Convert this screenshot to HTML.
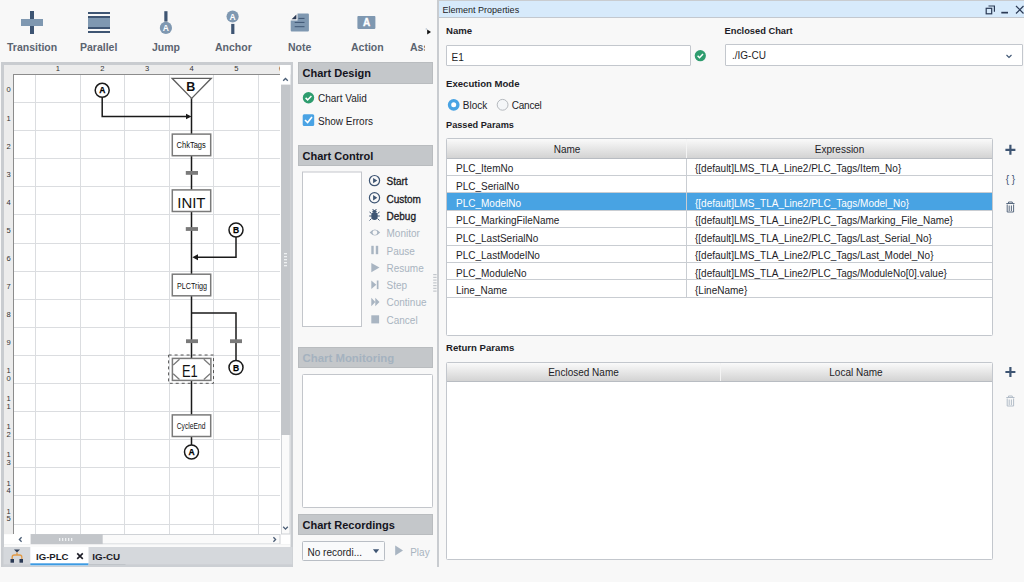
<!DOCTYPE html>
<html><head><meta charset="utf-8">
<style>
*{margin:0;padding:0;box-sizing:border-box}
html,body{width:1024px;height:582px;overflow:hidden;background:#f8f8f8;font-family:"Liberation Sans",sans-serif;color:#1d1d27}
.a{position:absolute}
.tl{position:absolute;font-weight:bold;font-size:10.5px;color:#5b6470;white-space:nowrap;line-height:12px}
.hdr{position:absolute;left:298px;width:135px;background:#c4c7ca;box-shadow:inset 0 0 0 1px #b9bcbf;font-weight:bold;font-size:11px;color:#141420;padding-left:4.5px;white-space:nowrap}
.lbl{position:absolute;font-size:10px;white-space:nowrap;line-height:12px}
.bl{position:absolute;font-weight:bold;font-size:9.6px;white-space:nowrap;line-height:12px}
</style></head><body>
<div id="root" class="a" style="left:0;top:0;width:1024px;height:582px">

<!-- TOOLBAR -->
<div class="a" style="left:30px;top:11px;width:4px;height:23px;background:#3e5573"></div>
<div class="a" style="left:21px;top:19px;width:22px;height:7px;background:#7f98b1"></div>
<div class="tl" style="left:7px;top:41px">Transition</div>

<div class="a" style="left:88px;top:12px;width:22px;height:2px;background:#3e5573"></div>
<div class="a" style="left:88px;top:16px;width:22px;height:13px;background:#7f98b1;border-top:2px solid #3e5573;border-bottom:2px solid #3e5573"></div>
<div class="a" style="left:88px;top:31px;width:22px;height:2px;background:#3e5573"></div>
<div class="tl" style="left:80px;top:41px">Parallel</div>

<svg class="a" style="left:140px;top:0" width="300" height="40" viewBox="140 0 300 40" font-family="Liberation Sans, sans-serif">
<rect x="164.3" y="11.2" width="3.2" height="10.4" fill="#3e5573"/>
<circle cx="165.9" cy="27.9" r="6.1" fill="#7f98b1"/>
<text x="165.9" y="31" font-size="8.5px" font-weight="bold" fill="#fff" text-anchor="middle">A</text>
<circle cx="232.6" cy="16.5" r="6.1" fill="#7f98b1"/>
<text x="232.6" y="19.6" font-size="8.5px" font-weight="bold" fill="#fff" text-anchor="middle">A</text>
<rect x="231.2" y="23.9" width="3.2" height="10.1" fill="#3e5573"/>
<path d="M297.5 13.6 H307.9 Q308.9 13.6 308.9 14.6 V30.6 Q308.9 31.6 307.9 31.6 H291.7 Q290.7 31.6 290.7 30.6 V20.4 L297.5 20.4 Z" fill="#7f98b1"/>
<path d="M291.6 19.3 L296.4 14.5 V19.3 Z" fill="#2b3a55"/>
<g fill="#3e5573"><rect x="298.5" y="17.9" width="6" height="1"/><rect x="294.7" y="21.9" width="9.8" height="1"/><rect x="294.7" y="26.2" width="9.8" height="1"/></g>
<rect x="357.4" y="16.1" width="18" height="12.8" rx="0.8" fill="#7f98b1"/>
<text x="366.6" y="26" font-size="10px" font-weight="bold" fill="#fff" stroke="#fff" stroke-width="0.35" text-anchor="middle">A</text>
<path d="M427.2 29.5 L431 32 L427.2 34.5 Z" fill="#111"/>
<path d="M425.5 29 L426.5 28 V30 Z" fill="#7f98b1"/>
</svg>
<div class="tl" style="left:152px;top:41px">Jump</div>
<div class="tl" style="left:215px;top:41px">Anchor</div>
<div class="tl" style="left:288px;top:41px">Note</div>
<div class="tl" style="left:351px;top:41px">Action</div>
<div class="tl" style="left:410px;top:41px;width:14.5px;overflow:hidden">Ass</div>

<!-- CHART FRAME -->
<svg class="a" style="left:0;top:0" width="300" height="582" viewBox="0 0 300 582" font-family="Liberation Sans, sans-serif">
<!-- frame -->
<rect x="1" y="62" width="292" height="505" fill="#c9ccd0"/>
<rect x="4" y="65" width="286.5" height="479.5" fill="#ffffff"/>
<!-- ruler top & left -->
<rect x="4" y="65" width="276" height="9.5" fill="#ececec"/>
<rect x="4" y="65" width="9.3" height="469.2" fill="#ececec"/>
<!-- grid -->
<g stroke="#dbdde0" stroke-width="1">
<line x1="35.5" y1="75" x2="35.5" y2="534" />
<line x1="80.5" y1="75" x2="80.5" y2="534" />
<line x1="124.5" y1="75" x2="124.5" y2="534" />
<line x1="169.5" y1="75" x2="169.5" y2="534" />
<line x1="213.5" y1="75" x2="213.5" y2="534" />
<line x1="258.5" y1="75" x2="258.5" y2="534" />
<line x1="13.5" y1="102.5" x2="280" y2="102.5" />
<line x1="13.5" y1="130.5" x2="280" y2="130.5" />
<line x1="13.5" y1="158.5" x2="280" y2="158.5" />
<line x1="13.5" y1="186.5" x2="280" y2="186.5" />
<line x1="13.5" y1="214.5" x2="280" y2="214.5" />
<line x1="13.5" y1="243.5" x2="280" y2="243.5" />
<line x1="13.5" y1="271.5" x2="280" y2="271.5" />
<line x1="13.5" y1="299.5" x2="280" y2="299.5" />
<line x1="13.5" y1="327.5" x2="280" y2="327.5" />
<line x1="13.5" y1="355.5" x2="280" y2="355.5" />
<line x1="13.5" y1="383.5" x2="280" y2="383.5" />
<line x1="13.5" y1="411.5" x2="280" y2="411.5" />
<line x1="13.5" y1="439.5" x2="280" y2="439.5" />
<line x1="13.5" y1="467.5" x2="280" y2="467.5" />
<line x1="13.5" y1="495.5" x2="280" y2="495.5" />
<line x1="13.5" y1="524.5" x2="280" y2="524.5" />
</g>
<line x1="13" y1="74.5" x2="280" y2="74.5" stroke="#8c8c8c" stroke-width="1"/>
<line x1="13.5" y1="74.5" x2="13.5" y2="534" stroke="#8c8c8c" stroke-width="1"/>
<!-- ruler labels -->
<g font-size="7.6px" fill="#333" text-anchor="middle">
<text x="57.8" y="71.4">1</text>
<text x="102.4" y="71.4">2</text>
<text x="147" y="71.4">3</text>
<text x="191.7" y="71.4">4</text>
<text x="236.3" y="71.4">5</text>
<text x="281" y="71.4">6</text>
<text x="8.5" y="92">0</text>
<text x="8.5" y="120.5">1</text>
<text x="8.5" y="148.5">2</text>
<text x="8.5" y="176.5">3</text>
<text x="8.5" y="204.5">4</text>
<text x="8.5" y="232.5">5</text>
<text x="8.5" y="260.5">6</text>
<text x="8.5" y="288.5">7</text>
<text x="8.5" y="316.5">8</text>
<text x="8.5" y="345">9</text>
<text x="8.5" y="373.1">1</text><text x="8.5" y="380.8">0</text>
<text x="8.5" y="401.2">1</text><text x="8.5" y="408.9">1</text>
<text x="8.5" y="429.4">1</text><text x="8.5" y="437.0">2</text>
<text x="8.5" y="457.4">1</text><text x="8.5" y="465.1">3</text>
<text x="8.5" y="485.6">1</text><text x="8.5" y="493.2">4</text>
<text x="8.5" y="513.6">1</text><text x="8.5" y="521.2">5</text>
</g>
<!-- top-right corner white -->
<rect x="280" y="65" width="10.5" height="9.5" fill="#fff"/>
<!-- vertical scrollbar -->
<rect x="281.5" y="85" width="8.5" height="449" fill="#fafafa" stroke="#cfd2d6" stroke-width="1"/>
<rect x="281" y="85" width="9.5" height="350" fill="#c3c6ca"/>
<path d="M283.2 80.8 L285.5 78.5 L287.8 80.8" fill="none" stroke="#4a5d75" stroke-width="1.3"/>
<path d="M283.2 526.8 L285.5 529.1 L287.8 526.8" fill="none" stroke="#4a5d75" stroke-width="1.3"/>
<g fill="#eef0f2"><rect x="284" y="253" width="3" height="1.3"/><rect x="284" y="256" width="3" height="1.3"/><rect x="284" y="259" width="3" height="1.3"/><rect x="284" y="262" width="3" height="1.3"/><rect x="284" y="265" width="3" height="1.3"/></g>
<!-- horizontal scrollbar -->
<rect x="31" y="534.5" width="249" height="9.5" fill="#fafafa" stroke="#cfd2d6" stroke-width="1"/>
<rect x="31" y="534.2" width="71.7" height="10.3" fill="#c3c6ca"/>
<path d="M21.6 537.2 L19.4 539.5 L21.6 541.8" fill="none" stroke="#4a5d75" stroke-width="1.3"/>
<path d="M273.4 537.2 L275.6 539.5 L273.4 541.8" fill="none" stroke="#4a5d75" stroke-width="1.3"/>
<g fill="#eef0f2"><rect x="59" y="538" width="1.3" height="3"/><rect x="62" y="538" width="1.3" height="3"/><rect x="65" y="538" width="1.3" height="3"/><rect x="68" y="538" width="1.3" height="3"/><rect x="71" y="538" width="1.3" height="3"/></g>
<!-- tab bar -->
<rect x="4" y="544.3" width="286.5" height="2.7" fill="#fafafa"/>
<rect x="3.5" y="547" width="289" height="19.3" fill="#d5d8dc"/>
<rect x="3.5" y="564.6" width="289" height="1" fill="#c5c9ce"/>
<rect x="30.3" y="547" width="58.2" height="18.5" fill="#fff"/>
<rect x="30.3" y="563.3" width="58.2" height="2" fill="#3d9be3"/>
<rect x="88.5" y="564" width="37" height="1" fill="#c0c4c9"/>
<text x="36" y="560.2" font-size="9.6px" font-weight="bold" fill="#1d1d27">IG-PLC</text>
<path d="M77.2 553.4 L82.8 558.8 M82.8 553.4 L77.2 558.8" stroke="#1d1d27" stroke-width="1.6"/>
<text x="92.3" y="560.2" font-size="9.8px" font-weight="bold" fill="#1d1d27">IG-CU</text>
<!-- tab icon -->
<path d="M14 549.5 H20 L17 552.5 Z" fill="#2b3a55"/>
<path d="M17 552.5 V555 M12.2 559 V557 Q12.2 555 14.5 555 H19.5 Q21.8 555 21.8 557 V559" fill="none" stroke="#e29a46" stroke-width="1.3"/>
<rect x="10.5" y="559" width="3.5" height="3.7" fill="#2b3a55"/>
<rect x="19.5" y="559" width="3.5" height="3.7" fill="#2b3a55"/>

<!-- CHART CONTENT -->
<g stroke="#1a1a1a" stroke-width="1.5" fill="none">
<line x1="191.5" y1="98" x2="191.5" y2="445"/>
<path d="M102.2 97.5 V116.5 H187"/>
<path d="M236 237 V257.2 H196"/>
<path d="M191.5 313 H236 V361"/>
</g>
<path d="M186 113.8 L191.5 116.5 L186 119.2 Z" fill="#1a1a1a"/>
<path d="M198 254.2 L192.3 257.2 L198 260.2 Z" fill="#1a1a1a"/>
<!-- start triangle -->
<path d="M172.1 78.3 H211.3 L191.65 98.4 Z" fill="#fff" stroke="#5e5e5e" stroke-width="1.3"/>
<text x="190.7" y="90.6" font-size="12.5px" font-weight="bold" fill="#111" text-anchor="middle">B</text>
<!-- circles -->
<g fill="#fff" stroke="#1a1a1a" stroke-width="1.5">
<circle cx="102.2" cy="90.3" r="7"/>
<circle cx="236" cy="230" r="7"/>
<circle cx="236" cy="367.5" r="7"/>
<circle cx="191.5" cy="452" r="7"/>
</g>
<g font-size="8.5px" font-weight="bold" fill="#000" stroke="#000" stroke-width="0.25" text-anchor="middle">
<text x="102.2" y="93.4">A</text>
<text x="236" y="233.1">B</text>
<text x="236" y="370.6">B</text>
<text x="191.5" y="455.1">A</text>
</g>
<!-- steps -->
<g fill="#fff" stroke="#7a7a7a" stroke-width="1.5">
<rect x="172.3" y="134.1" width="38.4" height="21.6"/>
<rect x="172.3" y="189.9" width="38.4" height="21.6"/>
<rect x="172.3" y="274.2" width="38.4" height="21.6"/>
<rect x="172.3" y="414.9" width="38.4" height="21.6"/>
<rect x="172.4" y="358.4" width="38.5" height="22"/>
</g>
<path d="M179.5 359.2 L173.2 365 M203.8 359.2 L210.1 365 M179.5 379.6 L173.2 373.8 M203.8 379.6 L210.1 373.8" stroke="#7a7a7a" stroke-width="1.3"/>
<rect x="168.6" y="355" width="44.9" height="28.3" fill="none" stroke="#555" stroke-width="1" stroke-dasharray="3 3"/>
<g font-size="8.3px" fill="#111">
<text x="176.6" y="148" textLength="29.2" lengthAdjust="spacingAndGlyphs">ChkTags</text>
<text x="177" y="288.8" textLength="30.1" lengthAdjust="spacingAndGlyphs">PLCTrigg</text>
<text x="176.7" y="428.6" textLength="28.7" lengthAdjust="spacingAndGlyphs">CycleEnd</text>
</g>
<text x="177.3" y="208.2" font-size="15px" fill="#111" textLength="28.2" lengthAdjust="spacingAndGlyphs">INIT</text>
<text x="182" y="376.8" font-size="17px" fill="#111" textLength="15.8" lengthAdjust="spacingAndGlyphs">E1</text>
<!-- transitions -->
<g fill="#7a7a7a">
<rect x="185.8" y="171" width="12.2" height="3.8"/>
<rect x="185.8" y="227.1" width="12.2" height="3.8"/>
<rect x="186" y="339.3" width="12" height="3.8"/>
<rect x="230" y="339.3" width="12" height="3.8"/>
</g>
</svg>


<!-- SIDE PANELS -->
<div class="hdr" style="top:62px;height:22px;line-height:23px">Chart Design</div>
<div class="lbl" style="left:318px;top:93px">Chart Valid</div>
<div class="lbl" style="left:318px;top:115.5px">Show Errors</div>
<div class="hdr" style="top:145px;height:21px;line-height:23px">Chart Control</div>
<div class="hdr" style="top:347px;height:21.3px;line-height:23px;color:#a5b2bf;font-size:11.4px">Chart Monitoring</div>
<div class="hdr" style="top:514.2px;height:20.5px;line-height:23px">Chart Recordings</div>

<!-- SIDE CONTENT -->
<svg class="a" style="left:295px;top:85px" width="145" height="482" viewBox="295 85 145 482" font-family="Liberation Sans, sans-serif">
<circle cx="308.5" cy="97.8" r="5.7" fill="#2e9c6e"/>
<path d="M305.6 97.9 L307.6 99.9 L311.4 95.9" fill="none" stroke="#fff" stroke-width="1.5"/>
<rect x="302.7" y="114.2" width="11.5" height="11.9" rx="1.5" fill="#4aa3e4"/>
<path d="M305 120 L307.6 122.6 L312 117" fill="none" stroke="#fff" stroke-width="1.6"/>
<!-- list box -->
<rect x="302.5" y="172" width="59" height="154.5" fill="#fff" stroke="#c3c6cb" stroke-width="1"/>
<!-- control icons -->
<g fill="none" stroke="#3e5573" stroke-width="1.2">
<circle cx="374.5" cy="180.6" r="5.1"/>
<circle cx="374.5" cy="197.8" r="5.1"/>
</g>
<path d="M373.1 177.9 L377.3 180.6 L373.1 183.3 Z M373.1 195.1 L377.3 197.8 L373.1 200.5 Z" fill="#3e5573"/>
<g fill="#3e5573">
<ellipse cx="374.5" cy="216" rx="3.3" ry="4"/>
<ellipse cx="374.5" cy="211.2" rx="2" ry="1.3"/>
</g>
<path d="M369.5 212 L371.5 213.5 M379.5 212 L377.5 213.5 M369.2 216 H371.5 M379.8 216 H377.5 M369.5 220.5 L371.5 218.5 M379.5 220.5 L377.5 218.5 M372.5 209 L373.5 210 M376.5 209 L375.5 210" stroke="#3e5573" stroke-width="1"/>
<g fill="#a9b5c2">
<path d="M369.6 232.6 Q374.9 226.6 380.2 232.6 Q374.9 238.6 369.6 232.6 Z M374.9 230.2 A2.4 2.4 0 1 0 374.9 235 A2.4 2.4 0 1 0 374.9 230.2 Z" fill-rule="evenodd"/>
<rect x="371.3" y="245.8" width="2.4" height="8.4"/>
<rect x="375.8" y="245.8" width="2.4" height="8.4"/>
<path d="M371.3 262.9 L379.5 267.6 L371.3 272.3 Z"/>
<path d="M371.3 280.5 L376.3 284.8 L371.3 289.1 Z"/>
<rect x="376.8" y="280.5" width="1.7" height="8.6"/>
<path d="M371.3 297.8 L375.3 302 L371.3 306.2 Z M375.3 297.8 L379.5 302 L375.3 306.2 Z"/>
<rect x="371.3" y="315.3" width="7.8" height="8.1"/>
</g>
<!-- monitoring box -->
<rect x="302.5" y="374.5" width="130" height="133" rx="1" fill="#fff" stroke="#c3c6cb" stroke-width="1"/>
<!-- recordings dropdown -->
<rect x="302.5" y="541.5" width="82" height="19" rx="1" fill="#f9fafb" stroke="#b9bec5" stroke-width="1"/>
<path d="M372.9 549.3 H379.2 L376.05 553.3 Z" fill="#3e5573"/>
<path d="M395.2 545.5 L403 550.5 L395.2 555.5 Z" fill="#a9b5c2"/>
</svg>
<div class="lbl" style="left:386.5px;top:176.2px;color:#1a1a24;-webkit-text-stroke:0.3px">Start</div>
<div class="lbl" style="left:386.5px;top:193.6px;color:#1a1a24;-webkit-text-stroke:0.3px">Custom</div>
<div class="lbl" style="left:386.5px;top:210.9px;color:#1a1a24;-webkit-text-stroke:0.3px">Debug</div>
<div class="lbl" style="left:386.5px;top:228.2px;color:#a9b4c0">Monitor</div>
<div class="lbl" style="left:386.5px;top:245.5px;color:#a9b4c0">Pause</div>
<div class="lbl" style="left:386.5px;top:262.8px;color:#a9b4c0">Resume</div>
<div class="lbl" style="left:386.5px;top:280.1px;color:#a9b4c0">Step</div>
<div class="lbl" style="left:386.5px;top:297.4px;color:#a9b4c0">Continue</div>
<div class="lbl" style="left:386.5px;top:314.7px;color:#a9b4c0">Cancel</div>
<div class="lbl" style="left:307.5px;top:546.5px">No recordi...</div>
<div class="lbl" style="left:410.2px;top:546.5px;color:#a9b4c0">Play</div>
<!-- DIVIDER -->
<svg class="a" style="left:430px;top:270px" width="8" height="26" viewBox="430 270 8 26"><rect x="433.2" y="274.00" width="3.4" height="1.2" fill="#c3c7cc"/><rect x="433.2" y="276.75" width="3.4" height="1.2" fill="#c3c7cc"/><rect x="433.2" y="279.50" width="3.4" height="1.2" fill="#c3c7cc"/><rect x="433.2" y="282.25" width="3.4" height="1.2" fill="#c3c7cc"/><rect x="433.2" y="285.00" width="3.4" height="1.2" fill="#c3c7cc"/><rect x="433.2" y="287.75" width="3.4" height="1.2" fill="#c3c7cc"/><rect x="433.2" y="290.50" width="3.4" height="1.2" fill="#c3c7cc"/></svg>

<div class="a" style="left:437px;top:0;width:2px;height:567px;background:#c9ccd0"></div>

<!-- PROPERTIES -->
<div class="a" style="left:439px;top:0;width:585px;height:18px;background:#d7eafb;border-top:1px solid #c9ccd0;border-bottom:1px solid #c3c8cf"></div>
<div class="lbl" style="left:442.6px;top:4px;font-size:9px">Element Properties</div>
<div class="bl" style="left:446px;top:25px">Name</div>
<div class="lbl" style="left:724.5px;top:25.3px;font-weight:bold;font-size:9.3px">Enclosed Chart</div>
<div class="a" style="left:446px;top:45px;width:245px;height:21px;background:#fff;border:1px solid #c3c7cd;border-radius:1px"></div>
<div class="lbl" style="left:451.6px;top:51.6px;font-size:10px">E1</div>
<div class="a" style="left:725px;top:44px;width:298px;height:22px;background:#fff;border:1px solid #c3c7cd;border-radius:1px"></div>
<div class="lbl" style="left:732px;top:50px">./IG-CU</div>
<svg class="a" style="left:440px;top:0" width="584" height="582" viewBox="440 0 584 582">
<circle cx="700.3" cy="55.7" r="5.6" fill="#2e9c6e"/>
<path d="M697.6 55.8 L699.5 57.7 L703 54" fill="none" stroke="#fff" stroke-width="1.5"/>
<path d="M1006.5 55 L1009 57.5 L1011.5 55" fill="none" stroke="#3e5573" stroke-width="1.1"/>
<circle cx="453.7" cy="104.8" r="4.2" fill="#fff" stroke="#48a3e3" stroke-width="3.4"/>
<circle cx="502.6" cy="104.8" r="5.4" fill="#f4f6f8" stroke="#b5b9be" stroke-width="1"/>
<!-- window buttons -->
<g fill="none" stroke="#2b3a55" stroke-width="1.2">
<rect x="986.2" y="8.3" width="5.5" height="5.5"/>
<path d="M988.5 6 H994.4 V11.8"/>
<path d="M1016 6 L1023.5 13.5 M1023.5 6 L1016 13.5"/>
</g>
<rect x="1001.3" y="11.8" width="6.7" height="1.7" fill="#2b3a55"/>
<!-- side action icons -->
<path d="M1010.4 144.8 V154.8 M1005.4 149.8 H1015.4" stroke="#3e5573" stroke-width="2.2"/>
<text x="1010.4" y="182.5" font-family="Liberation Sans, sans-serif" font-size="10px" fill="#3e5573" text-anchor="middle">{ }</text>
<g fill="none" stroke="#5a6b80" stroke-width="1">
<path d="M1006.3 203.5 H1014.5 M1008.5 203.3 V202 H1012.3 V203.3 M1007.2 204.5 V212 H1013.6 V204.5 M1009.2 205.5 V211 M1011.4 205.5 V211"/>
</g>
<path d="M1010.4 367 V377 M1005.4 372 H1015.4" stroke="#3e5573" stroke-width="2.2"/>
<g fill="none" stroke="#b3bdc8" stroke-width="1">
<path d="M1006.3 397.5 H1014.5 M1008.5 397.3 V396 H1012.3 V397.3 M1007.2 398.5 V406 H1013.6 V398.5 M1009.2 399.5 V405 M1011.4 399.5 V405"/>
</g>
</svg>
<div class="lbl" style="left:462.8px;top:99.5px">Block</div>
<div class="lbl" style="left:511.8px;top:99.5px;letter-spacing:-0.25px">Cancel</div>
<!-- passed params table -->
<div class="a" style="left:446px;top:138px;width:547px;height:198px;background:#fff;border:1px solid #c3c7cd;border-radius:1.5px"></div>
<div class="a" style="left:447px;top:139px;width:545px;height:19.5px;background:linear-gradient(#fafafa,#d3d3d3);border-bottom:1px solid #b8bcc2"></div>
<div class="a" style="left:686px;top:139px;width:1px;height:19px;background:#f4f4f4"></div>
<div class="lbl" style="left:448px;top:143.5px;width:238px;text-align:center">Name</div>
<div class="lbl" style="left:687px;top:143.5px;width:305px;text-align:center">Expression</div>
<!--ROWS-->
<div class="a" style="left:447px;top:158.60px;width:545px;height:17.40px;background:#fff;border-bottom:1px solid #c9cdd2"></div>
<div class="lbl" style="left:456px;top:163.10px;color:#1d1d27">PLC_ItemNo</div>
<div class="lbl" style="left:695px;top:163.10px;color:#1d1d27">{[default]LMS_TLA_Line2/PLC_Tags/Item_No}</div>
<div class="a" style="left:447px;top:176.00px;width:545px;height:17.40px;background:#fff;border-bottom:1px solid #c9cdd2"></div>
<div class="lbl" style="left:456px;top:180.50px;color:#1d1d27">PLC_SerialNo</div>
<div class="a" style="left:447px;top:193.40px;width:545px;height:17.40px;background:#48a3e3;border-bottom:1px solid #c9cdd2"></div>
<div class="lbl" style="left:456px;top:197.90px;color:#fff">PLC_ModelNo</div>
<div class="lbl" style="left:695px;top:197.90px;color:#fff">{[default]LMS_TLA_Line2/PLC_Tags/Model_No}</div>
<div class="a" style="left:447px;top:210.80px;width:545px;height:17.40px;background:#fff;border-bottom:1px solid #c9cdd2"></div>
<div class="lbl" style="left:456px;top:215.30px;color:#1d1d27">PLC_MarkingFileName</div>
<div class="lbl" style="left:695px;top:215.30px;color:#1d1d27">{[default]LMS_TLA_Line2/PLC_Tags/Marking_File_Name}</div>
<div class="a" style="left:447px;top:228.20px;width:545px;height:17.40px;background:#fff;border-bottom:1px solid #c9cdd2"></div>
<div class="lbl" style="left:456px;top:232.70px;color:#1d1d27">PLC_LastSerialNo</div>
<div class="lbl" style="left:695px;top:232.70px;color:#1d1d27">{[default]LMS_TLA_Line2/PLC_Tags/Last_Serial_No}</div>
<div class="a" style="left:447px;top:245.60px;width:545px;height:17.40px;background:#fff;border-bottom:1px solid #c9cdd2"></div>
<div class="lbl" style="left:456px;top:250.10px;color:#1d1d27">PLC_LastModelNo</div>
<div class="lbl" style="left:695px;top:250.10px;color:#1d1d27">{[default]LMS_TLA_Line2/PLC_Tags/Last_Model_No}</div>
<div class="a" style="left:447px;top:263.00px;width:545px;height:17.40px;background:#fff;border-bottom:1px solid #c9cdd2"></div>
<div class="lbl" style="left:456px;top:267.50px;color:#1d1d27">PLC_ModuleNo</div>
<div class="lbl" style="left:695px;top:267.50px;color:#1d1d27">{[default]LMS_TLA_Line2/PLC_Tags/ModuleNo[0].value}</div>
<div class="a" style="left:447px;top:280.40px;width:545px;height:17.40px;background:#fff;border-bottom:1px solid #c9cdd2"></div>
<div class="lbl" style="left:456px;top:284.90px;color:#1d1d27">Line_Name</div>
<div class="lbl" style="left:695px;top:284.90px;color:#1d1d27">{LineName}</div>
<div class="a" style="left:686px;top:158.6px;width:1px;height:139.2px;background:#c9cdd2"></div>
<!--/ROWS-->
<!-- return params table -->
<div class="a" style="left:446px;top:362px;width:547px;height:198px;background:#fff;border:1px solid #c3c7cd;border-radius:1.5px"></div>
<div class="a" style="left:447px;top:363px;width:545px;height:18.5px;background:linear-gradient(#fafafa,#d3d3d3);border-bottom:1px solid #b8bcc2"></div>
<div class="a" style="left:719.5px;top:363px;width:1px;height:18px;background:#f4f4f4"></div>
<div class="lbl" style="left:447.5px;top:366.5px;width:272px;text-align:center">Enclosed Name</div>
<div class="lbl" style="left:720.5px;top:366.5px;width:271px;text-align:center">Local Name</div>

<div class="bl" style="left:446px;top:78px">Execution Mode</div>
<div class="bl" style="left:446px;top:118.5px;font-size:9.2px">Passed Params</div>
<div class="bl" style="left:446px;top:342px">Return Params</div>

</div>
</body></html>
